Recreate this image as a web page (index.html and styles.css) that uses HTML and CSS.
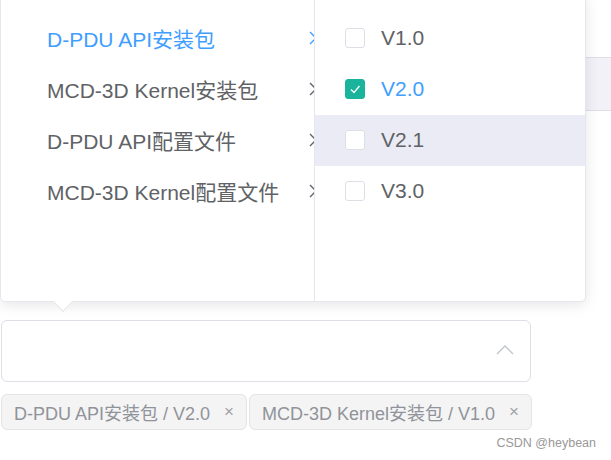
FILE: index.html
```html
<!DOCTYPE html>
<html>
<head>
<meta charset="utf-8">
<link rel="stylesheet" href="styles.css">
</head>
<body>
<div class="stage">
  <div class="under">
    <div class="under-bar"></div>
  </div>
  <div class="select">
    <svg class="caret" width="18" height="12" viewBox="0 0 18 12"><polyline points="1,10 9,2 17,10" fill="none" stroke="#c0c4cc" stroke-width="1.3"/></svg>
  </div>
  <div class="tags">
    <span class="tag">D-PDU API安装包 / V2.0<span class="close">×</span></span>
    <span class="tag">MCD-3D Kernel安装包 / V1.0<span class="close">×</span></span>
  </div>

  <div class="panel">
    <ul class="menu menu-main">
      <li class="item active">D-PDU API安装包<svg class="chev" width="8" height="14" viewBox="0 0 8 14"><polyline points="1,1 7,7 1,13" fill="none" stroke="currentColor" stroke-width="1.4"/></svg></li>
      <li class="item">MCD-3D Kernel安装包<svg class="chev" width="8" height="14" viewBox="0 0 8 14"><polyline points="1,1 7,7 1,13" fill="none" stroke="currentColor" stroke-width="1.4"/></svg></li>
      <li class="item">D-PDU API配置文件<svg class="chev" width="8" height="14" viewBox="0 0 8 14"><polyline points="1,1 7,7 1,13" fill="none" stroke="currentColor" stroke-width="1.4"/></svg></li>
      <li class="item">MCD-3D Kernel配置文件<svg class="chev" width="8" height="14" viewBox="0 0 8 14"><polyline points="1,1 7,7 1,13" fill="none" stroke="currentColor" stroke-width="1.4"/></svg></li>
    </ul>
    <ul class="menu menu-sub">
      <li class="opt"><span class="box"></span>V1.0</li>
      <li class="opt active"><span class="box checked"><svg width="14" height="14" viewBox="0 0 14 14"><polyline points="3,7.5 6,10.5 11.5,4" fill="none" stroke="#fff" stroke-width="1.3"/></svg></span>V2.0</li>
      <li class="opt hover"><span class="box"></span>V2.1</li>
      <li class="opt"><span class="box"></span>V3.0</li>
    </ul>
    <span class="arrow"></span>
  </div>

  <div class="mark">CSDN @heybean</div>
</div>
</body>
</html>
```

FILE: styles.css
```css
* { box-sizing: border-box; }
html, body { margin: 0; padding: 0; background: #fff; }
body { font-family: "Liberation Sans", Arial, "Noto Sans CJK SC", sans-serif; }

.stage {
  position: relative;
  width: 611px;
  height: 460px;
  overflow: hidden;
}

.under {
  height: 320px;
  padding-top: 57px;
}
.under-bar {
  height: 54px;
  margin-left: 300px;
  background: #f1f1f7;
  border-top: 1px solid #dcdfe6;
  border-bottom: 1px solid #dcdfe6;
}

.select {
  width: 530px;
  height: 62px;
  margin-left: 1px;
  border: 1px solid #dcdfe6;
  border-radius: 6px;
  display: flex;
  align-items: center;
  justify-content: flex-end;
  padding-right: 16px;
}
.caret { display: block; margin-top: -2px; }

.tags {
  display: flex;
  gap: 2px;
  margin-top: 12px;
  margin-left: 1px;
}
.tag {
  display: inline-flex;
  align-items: center;
  height: 36px;
  padding: 0 12px 0 12px;
  background: #f4f4f5;
  border: 1px solid #e4e4e7;
  border-radius: 6px;
  color: #909399;
  font-size: 18px;
  white-space: nowrap;
}
.close {
  margin-left: 14px;
  font-size: 17px;
  color: #a0a3a8;
}

.panel {
  position: absolute;
  left: 0;
  top: -6px;
  width: 586px;
  height: 308px;
  background: #fff;
  border: 1px solid #e4e7ed;
  border-radius: 5px;
  box-shadow: 0 3px 14px rgba(0, 0, 0, 0.1);
  display: flex;
}
.arrow {
  position: absolute;
  left: 55px;
  bottom: -8px;
  width: 14px;
  height: 14px;
  background: #fff;
  border-right: 1px solid #e4e7ed;
  border-bottom: 1px solid #e4e7ed;
  transform: rotate(45deg);
}

.menu {
  list-style: none;
  margin: 0;
  padding: 18px 0 0 0;
  font-size: 21px;
  color: #606266;
}
.menu-main {
  width: 314px;
  border-right: 1px solid #e4e7ed;
  overflow: hidden;
}
.menu-sub { flex: 1; }

.item {
  position: relative;
  height: 51px;
  display: flex;
  align-items: center;
  padding-left: 46px;
  padding-bottom: 1px;
  white-space: nowrap;
}
.item.active { color: #409eff; }
.chev {
  position: absolute;
  right: -3px;
  top: 18px;
  color: #606266;
}
.item.active .chev { color: #409eff; }

.opt {
  height: 51px;
  display: flex;
  align-items: center;
  padding-left: 30px;
  padding-bottom: 1px;
}
.opt.active { color: #409eff; }
.opt.hover { background: #ebebf5; }
.box {
  width: 20px;
  height: 20px;
  border: 1px solid #dcdfe6;
  border-radius: 3px;
  background: #fff;
  margin-right: 16px;
  display: flex;
  align-items: center;
  justify-content: center;
}
.box.checked {
  background: #1ab39b;
  border-color: #1ab39b;
}
.box svg { display: block; }

.mark {
  position: absolute;
  right: 15px;
  bottom: 10px;
  font-size: 12.5px;
  color: #999;
  font-family: "Liberation Sans", Arial, sans-serif;
  text-shadow: 0 0 2px #fff;
}
```
